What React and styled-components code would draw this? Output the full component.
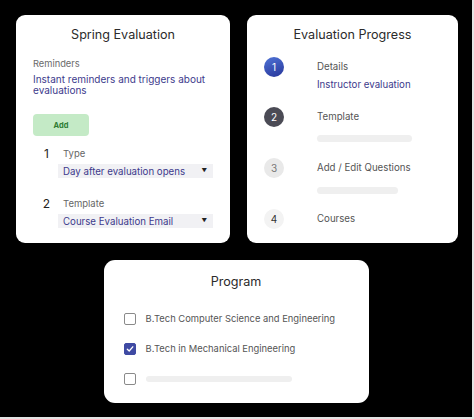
import React from "react";
import styled, { createGlobalStyle } from "styled-components";

const Global = createGlobalStyle`
  html, body { margin: 0; padding: 0; background: #e4e4e4; }
  body { font-family: Inter, "Noto Sans", sans-serif; }
`;

const Stage = styled.div`
  width: 472px;
  height: 417px;
  background: #000;
  box-sizing: border-box;
  padding-top: 15px;
  display: flex;
  flex-direction: column;
  align-items: center;
  gap: 17px;
`;

const Row = styled.div`
  display: flex;
  gap: 17px;
  margin-left: 2px;
`;

const Card = styled.div`
  background: #fff;
  border-radius: ${(p) => p.$radius || 9}px;
  width: ${(p) => p.$w}px;
  height: ${(p) => p.$h}px;
  box-sizing: border-box;
  padding: ${(p) => p.$pad || "0"};
  display: flex;
  flex-direction: column;
`;

const Title = styled.div`
  font-size: 12.6px;
  color: #2b2b2b;
  text-align: center;
  margin-top: ${(p) => p.$mt || 12}px;
  line-height: 16px;
`;

const Label = styled.div`
  font-size: 9.3px;
  color: #6a6a6a;
  line-height: 13px;
  margin-top: 14px;
`;

const Blue = styled.div`
  font-size: 10px;
  color: #3d3a8c;
  line-height: 11px;
  margin-top: 4px;
`;

const AddButton = styled.div`
  width: 56px;
  height: 22px;
  background: #c4eac6;
  border-radius: 4px;
  display: flex;
  align-items: center;
  justify-content: center;
  font-size: 7.5px;
  font-weight: 700;
  color: #2f7d34;
  margin-top: 18px;
`;

const Field = styled.div`
  display: grid;
  grid-template-columns: 25px 1fr;
  margin-top: ${(p) => p.$mt}px;
`;

const Num = styled.div`
  font-size: 12px;
  color: #222;
  text-align: center;
  padding-left: 2px;
  line-height: 14px;
`;

const FieldBody = styled.div`
  display: flex;
  flex-direction: column;
`;

const FieldLabel = styled.div`
  font-size: 9.5px;
  color: #666;
  line-height: 14px;
  padding-left: 5px;
`;

const Select = styled.div`
  margin-top: 3px;
  height: 14px;
  width: 155px;
  background: #f1f1f4;
  display: flex;
  align-items: center;
  justify-content: space-between;
  padding: 0 6px 0 5px;
  box-sizing: border-box;
  font-size: 9.7px;
  color: #3d3a8c;
`;

const Caret = styled.span`
  font-size: 5.5px;
  color: #222;
`;

const Steps = styled.div`
  display: flex;
  flex-direction: column;
  margin-top: 14px;
`;

const Step = styled.div`
  display: grid;
  grid-template-columns: 70px 1fr;
  align-items: start;
  height: ${(p) => p.$h}px;
`;

const Circle = styled.div`
  width: 20px;
  height: 20px;
  border-radius: 50%;
  margin-left: 17px;
  display: flex;
  align-items: center;
  justify-content: center;
  font-size: 10px;
  background: ${(p) => p.$bg};
  color: ${(p) => p.$fg};
`;

const StepBody = styled.div`
  display: flex;
  flex-direction: column;
  padding-top: 3px;
`;

const StepTitle = styled.div`
  font-size: 9.7px;
  color: #555;
  line-height: 13px;
`;

const StepSub = styled.div`
  font-size: 9.7px;
  color: #3d3a8c;
  line-height: 13px;
  margin-top: 5px;
`;

const Bar = styled.div`
  width: ${(p) => p.$w}px;
  height: ${(p) => p.$bh || 7}px;
  border-radius: 4px;
  background: #efefef;
  margin-top: ${(p) => p.$mt ?? 12}px;
`;

const CheckList = styled.div`
  display: flex;
  flex-direction: column;
  gap: 17px;
  margin-top: 22px;
  padding-left: 20px;
`;

const CheckRow = styled.div`
  display: flex;
  align-items: center;
  gap: 10px;
  height: 13px;
`;

const Box = styled.div`
  width: 10px;
  height: 10px;
  border-radius: 2px;
  border: 1px solid ${(p) => (p.$on ? "#3f4aa3" : "#8a8a8a")};
  background: ${(p) => (p.$on ? "#3f4aa3" : "#fff")};
  display: flex;
  align-items: center;
  justify-content: center;
`;

const CheckText = styled.div`
  font-size: 9.4px;
  color: #555;
`;

export default function App() {
  return (
    <>
      <Global />
      <Stage>
        <Row>
          <Card $w={214} $h={228} $pad="0 17px">
            <Title $mt={12}>Spring Evaluation</Title>
            <Label>Reminders</Label>
            <Blue>
              Instant reminders and triggers about
              <br />
              evaluations
            </Blue>
            <AddButton>Add</AddButton>
            <Field $mt={11}>
              <Num>1</Num>
              <FieldBody>
                <FieldLabel>Type</FieldLabel>
                <Select>
                  Day after evaluation opens<Caret>▼</Caret>
                </Select>
              </FieldBody>
            </Field>
            <Field $mt={19}>
              <Num>2</Num>
              <FieldBody>
                <FieldLabel>Template</FieldLabel>
                <Select>
                  Course Evaluation Email<Caret>▼</Caret>
                </Select>
              </FieldBody>
            </Field>
          </Card>
          <Card $w={211} $h={228}>
            <Title $mt={12}>Evaluation Progress</Title>
            <Steps>
              <Step $h={50}>
                <Circle $bg="linear-gradient(160deg,#4f73d6,#27369a)" $fg="#fff">1</Circle>
                <StepBody>
                  <StepTitle>Details</StepTitle>
                  <StepSub>Instructor evaluation</StepSub>
                </StepBody>
              </Step>
              <Step $h={51}>
                <Circle $bg="#4b4b55" $fg="#fff">2</Circle>
                <StepBody>
                  <StepTitle>Template</StepTitle>
                  <Bar $w={95} />
                </StepBody>
              </Step>
              <Step $h={51}>
                <Circle $bg="#e9e9e9" $fg="#777">3</Circle>
                <StepBody>
                  <StepTitle>Add / Edit Questions</StepTitle>
                  <Bar $w={81} $mt={13} />
                </StepBody>
              </Step>
              <Step $h={24}>
                <Circle $bg="#f3f3f3" $fg="#333">4</Circle>
                <StepBody>
                  <StepTitle>Courses</StepTitle>
                </StepBody>
              </Step>
            </Steps>
          </Card>
        </Row>
        <Card $w={265} $h={143} $radius={11}>
          <Title $mt={14}>Program</Title>
          <CheckList>
            <CheckRow>
              <Box />
              <CheckText>B.Tech Computer Science and Engineering</CheckText>
            </CheckRow>
            <CheckRow>
              <Box $on>
                <svg width="8" height="8" viewBox="0 0 8 8">
                  <path d="M1.3 4.2 L3.2 6 L6.8 1.8" fill="none" stroke="#fff" strokeWidth="1.3" strokeLinecap="round" strokeLinejoin="round" />
                </svg>
              </Box>
              <CheckText>B.Tech in Mechanical Engineering</CheckText>
            </CheckRow>
            <CheckRow>
              <Box />
              <Bar $w={146} $mt={0} $bh={6} />
            </CheckRow>
          </CheckList>
        </Card>
      </Stage>
    </>
  );
}
